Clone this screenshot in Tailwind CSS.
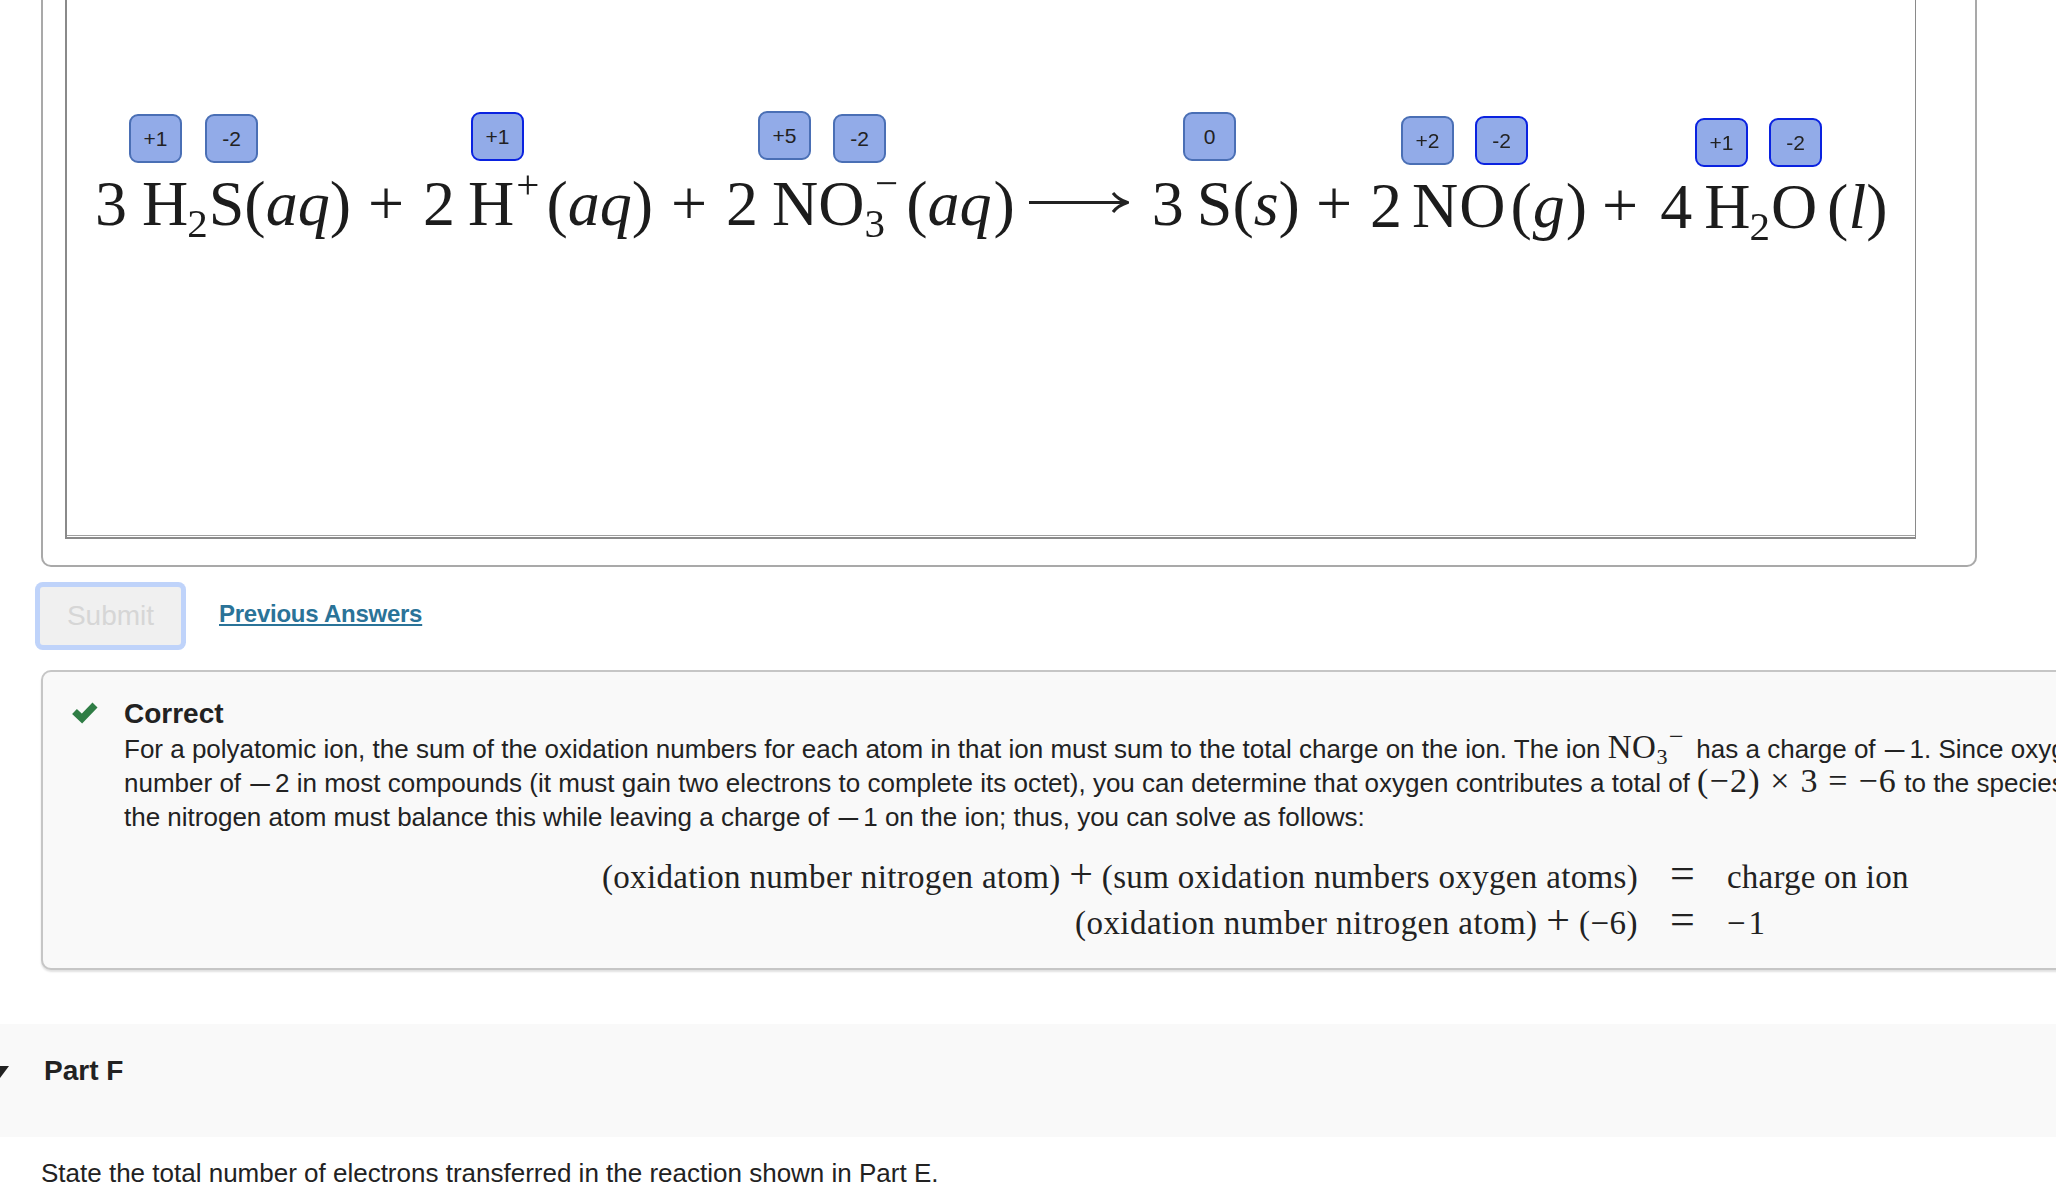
<!DOCTYPE html>
<html>
<head>
<meta charset="utf-8">
<script src="https://cdn.jsdelivr.net/npm/@tailwindcss/browser@4"></script>
</head>
<body class="bg-white">
<div class="relative w-[2056px] h-[1204px] overflow-hidden font-['Liberation_Sans',Arial,sans-serif] text-[#222] text-[26px] leading-[34px]">
  <div class="pl-[41px]">
    <!-- answer card -->
    <div class="w-[1936px] h-[567px] border-x-2 border-b-2 border-[#a9a9a9] rounded-b-[10px] pl-[22px]">
      <div class="relative w-[1851px] h-[539px] border-l-2 border-r-[1px] border-b-2 border-[#8a8a8a]">
        <div class="absolute left-0 right-0 bottom-[1px] h-px bg-[#a0a0a0]"></div>
        <div class="flex items-baseline pl-[28px] pt-[172px] whitespace-nowrap font-['Liberation_Serif',serif] text-[64px] leading-[64px] text-[#1c1c1c] blur-[0.4px]">
          <span>3</span><span class="ml-[15px]">H<sub class="text-[41px] -bottom-[12px] -ml-[1px]">2</sub><span class="ml-[1px]">S</span>(<i>aq</i>)</span>
          <span class="ml-[17px]">+</span>
          <span class="ml-[19px]">2</span><span class="ml-[13px]">H<sup class="text-[41px] -top-[27px] ml-[2px]">+</sup><span class="ml-[7px]">(</span><i>aq</i>)</span>
          <span class="ml-[18px]">+</span>
          <span class="ml-[19px]">2</span><span class="ml-[14px]">NO<sub class="text-[41px] -bottom-[12px]">3</sub><sup class="text-[41px] -top-[28px] -ml-[10px]">−</sup><span class="ml-[8px]">(</span><i class="mr-[2px]">aq</i>)</span>
          <svg class="ml-[14px] -translate-y-[12px]" width="100" height="21" viewBox="0 0 100 21"><path d="M0 10.500H97" stroke="#222" stroke-width="3"/><path d="M84 1Q89 7.500 98.500 10.500Q89 13.500 84 20" fill="none" stroke="#222" stroke-width="3"/></svg>
          <span class="ml-[23px]">3</span><span class="ml-[13px]">S(<i>s</i>)</span>
          <span class="ml-[16px]">+</span>
          <span class="ml-[18px] translate-y-[2px]">2</span><span class="ml-[10px] translate-y-[2px] tracking-[1px]">NO<span class="ml-[4px]">(</span><i>g</i>)</span>
          <span class="ml-[14px] translate-y-[2px]">+</span>
          <span class="ml-[22px] translate-y-[3px]">4</span><span class="ml-[12px] translate-y-[3px]">H<sub class="text-[41px] -bottom-[12px] -ml-[1px]">2</sub><span class="ml-[1px] mr-[10px]">O</span>(<i>l</i>)</span>
        </div>
        <div class="absolute left-[62px] top-[114px] w-[53px] h-[49px] flex items-center justify-center rounded-[9px] border-2 border-[#4a6fb5] bg-[#92abe8] text-[21px]">+1</div>
        <div class="absolute left-[138px] top-[114px] w-[53px] h-[49px] flex items-center justify-center rounded-[9px] border-2 border-[#4a6fb5] bg-[#92abe8] text-[21px]">-2</div>
        <div class="absolute left-[404px] top-[112px] w-[53px] h-[49px] flex items-center justify-center rounded-[9px] border-2 border-[#0a22e0] bg-[#92abe8] text-[21px]">+1</div>
        <div class="absolute left-[691px] top-[111px] w-[53px] h-[49px] flex items-center justify-center rounded-[9px] border-2 border-[#4a6fb5] bg-[#92abe8] text-[21px]">+5</div>
        <div class="absolute left-[766px] top-[114px] w-[53px] h-[49px] flex items-center justify-center rounded-[9px] border-2 border-[#4a6fb5] bg-[#92abe8] text-[21px]">-2</div>
        <div class="absolute left-[1116px] top-[112px] w-[53px] h-[49px] flex items-center justify-center rounded-[9px] border-2 border-[#4a6fb5] bg-[#92abe8] text-[21px]">0</div>
        <div class="absolute left-[1334px] top-[116px] w-[53px] h-[49px] flex items-center justify-center rounded-[9px] border-2 border-[#4a6fb5] bg-[#92abe8] text-[21px]">+2</div>
        <div class="absolute left-[1408px] top-[116px] w-[53px] h-[49px] flex items-center justify-center rounded-[9px] border-2 border-[#0a22e0] bg-[#92abe8] text-[21px]">-2</div>
        <div class="absolute left-[1628px] top-[118px] w-[53px] h-[49px] flex items-center justify-center rounded-[9px] border-2 border-[#0a22e0] bg-[#92abe8] text-[21px]">+1</div>
        <div class="absolute left-[1702px] top-[118px] w-[53px] h-[49px] flex items-center justify-center rounded-[9px] border-2 border-[#0a22e0] bg-[#92abe8] text-[21px]">-2</div>
      </div>
    </div>

    <!-- submit row -->
    <div class="flex items-center mt-[20px] h-[58px]">
      <div class="-ml-[1px] w-[141px] h-[58px] flex items-center justify-center rounded-[3px] bg-[#f0f0f0] ring-[5px] ring-[#bfd3fa] text-[28px] text-[#d6d6d6]">Submit</div>
      <a class="ml-[38px] -mt-[4px] font-bold text-[24px] tracking-[-0.25px] text-[#2a7398] underline">Previous Answers</a>
    </div>

    <!-- feedback -->
    <div class="mt-[25px] w-[2100px] h-[300px] border-2 border-[#c6c6c6] rounded-[10px] bg-[#f9f9f9] shadow-[0_2px_2px_rgba(0,0,0,0.12)] flex">
      <svg class="ml-[27px] mt-[29px] shrink-0" width="30" height="24" viewBox="0 0 30 24"><path d="M4.500 10.500L12 17.500L25 4" fill="none" stroke="#2f7d45" stroke-width="7"/></svg>
      <div class="ml-[24px] pt-[25px] whitespace-nowrap">
        <div class="font-bold text-[28px] h-[35px]">Correct</div>
        <div class="h-[34px]">For a polyatomic ion, the sum of the oxidation numbers for each atom in that ion must sum to the total charge on the ion. The ion <span class="font-['Liberation_Serif',serif] text-[33px] leading-[0] tracking-[0.5px]">NO<sub class="text-[22px]">3</sub><sup class="text-[26px] ml-[1px] mr-[5px]">−</sup></span> has a charge of <span class="font-['Liberation_Serif',serif] text-[42px] leading-[0] relative top-[7px] mr-[3px]">−</span>1. Since oxygen has an oxidation</div>
        <div class="h-[34px]">number of <span class="font-['Liberation_Serif',serif] text-[42px] leading-[0] relative top-[7px] mr-[3px]">−</span>2 in most compounds (it must gain two electrons to complete its octet), you can determine that oxygen contributes a total of <span class="font-['Liberation_Serif',serif] text-[34px] leading-[0] tracking-[1.200px]">(−2) × 3 = −6</span> to the species,</div>
        <div class="h-[34px]">the nitrogen atom must balance this while leaving a charge of <span class="font-['Liberation_Serif',serif] text-[42px] leading-[0] relative top-[7px] mr-[3px]">−</span>1 on the ion; thus, you can solve as follows:</div>
        <div class="mt-[22px] grid grid-cols-[1514px_89px_1fr] items-baseline gap-y-[7px] font-['Liberation_Serif',serif] text-[33px] leading-[36px]">
          <div class="text-right tracking-[0.33px]">(oxidation number nitrogen atom) <span class="text-[42px] leading-[0]">+</span> (sum oxidation numbers oxygen atoms)</div>
          <div class="text-center text-[44px] leading-[36px]">=</div>
          <div class="tracking-[0.2px]">charge on ion</div>
          <div class="text-right tracking-[0.45px]">(oxidation number nitrogen atom) <span class="text-[42px] leading-[0]">+</span> (−6)</div>
          <div class="text-center text-[44px] leading-[36px]">=</div>
          <div class="tracking-[3px]">−1</div>
        </div>
      </div>
    </div>
  </div>

  <!-- Part F -->
  <div class="mt-[54px] h-[113px] bg-[#f9f9f9] relative pl-[44px] pt-[30px] font-bold text-[28px]">
    <div class="absolute left-0 top-[42px] w-0 h-0 border-x-[9px] border-x-transparent border-t-[12px] border-t-[#222] -ml-[9px]"></div>
    Part F
  </div>
  <p class="mt-[19px] pl-[41px]">State the total number of electrons transferred in the reaction shown in Part E.</p>
</div>
</body>
</html>
